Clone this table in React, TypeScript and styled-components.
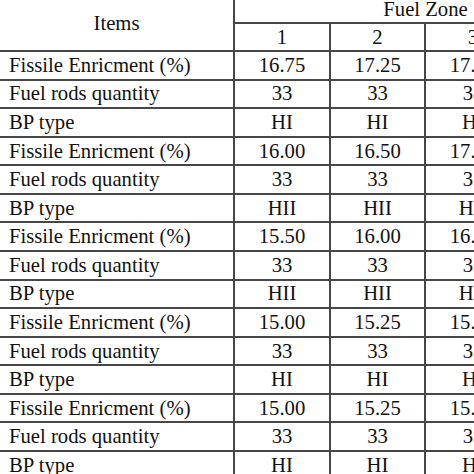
import styled, { createGlobalStyle } from "styled-components";

const GlobalStyle = createGlobalStyle`
  html, body {
    margin: 0;
    padding: 0;
    background: #ffffff;
    overflow: hidden;
  }
`;

const Frame = styled.div`
  width: 474px;
  height: 474px;
  overflow: hidden;
  background: #fff;
`;

const Table = styled.table`
  border-collapse: collapse;
  table-layout: fixed;
  width: 618px;
  margin: -6px 0 0 -2px;
  font-family: "Liberation Serif", "Times New Roman", serif;
  font-size: 20.7px;
  color: #111;
`;

const Row = styled.tr<{ $h?: number }>`
  height: ${(p) => p.$h ?? 28.57}px;
`;

const Cell = styled.td<{ $left?: boolean }>`
  border: 2px solid #474747;
  padding: ${(p) => (p.$left ? "0 0 0 9px" : "0")};
  text-align: ${(p) => (p.$left ? "left" : "center")};
  vertical-align: middle;
  line-height: 1;
  white-space: nowrap;
  overflow: hidden;
`;

const HeadCell = styled.th`
  border: 2px solid #474747;
  font-weight: normal;
  text-align: center;
  vertical-align: middle;
  line-height: 1;
  padding: 0;
  white-space: nowrap;
`;

type Block = {
  enrich: string[];
  rods: string[];
  bp: string[];
};

const blocks: Block[] = [
  { enrich: ["16.75", "17.25", "17.75", "18.25"], rods: ["33", "33", "33", "33"], bp: ["HI", "HI", "HI", "HI"] },
  { enrich: ["16.00", "16.50", "17.00", "17.50"], rods: ["33", "33", "33", "33"], bp: ["HII", "HII", "HII", "HII"] },
  { enrich: ["15.50", "16.00", "16.50", "17.00"], rods: ["33", "33", "33", "33"], bp: ["HII", "HII", "HII", "HII"] },
  { enrich: ["15.00", "15.25", "15.50", "15.75"], rods: ["33", "33", "33", "33"], bp: ["HI", "HI", "HI", "HI"] },
  { enrich: ["15.00", "15.25", "15.50", "15.75"], rods: ["33", "33", "33", "33"], bp: ["HI", "HI", "HI", "HI"] },
];

export default function App() {
  const rows: { label: string; values: string[] }[] = [];
  blocks.forEach((b) => {
    rows.push({ label: "Fissile Enricment (%)", values: b.enrich });
    rows.push({ label: "Fuel rods quantity", values: b.rods });
    rows.push({ label: "BP type", values: b.bp });
  });

  return (
    <Frame>
      <GlobalStyle />
      <Table>
        <colgroup>
          <col style={{ width: 235 }} />
          <col style={{ width: 96 }} />
          <col style={{ width: 95 }} />
          <col style={{ width: 96 }} />
          <col style={{ width: 96 }} />
        </colgroup>
        <thead>
          <Row $h={28}>
            <HeadCell rowSpan={2}>Items</HeadCell>
            <HeadCell colSpan={4}>Fuel Zone</HeadCell>
          </Row>
          <Row $h={28}>
            <HeadCell>1</HeadCell>
            <HeadCell>2</HeadCell>
            <HeadCell>3</HeadCell>
            <HeadCell>4</HeadCell>
          </Row>
        </thead>
        <tbody>
          {rows.map((r, i) => (
            <Row key={i}>
              <Cell $left>{r.label}</Cell>
              {r.values.map((v, j) => (
                <Cell key={j}>{v}</Cell>
              ))}
            </Row>
          ))}
        </tbody>
      </Table>
    </Frame>
  );
}
